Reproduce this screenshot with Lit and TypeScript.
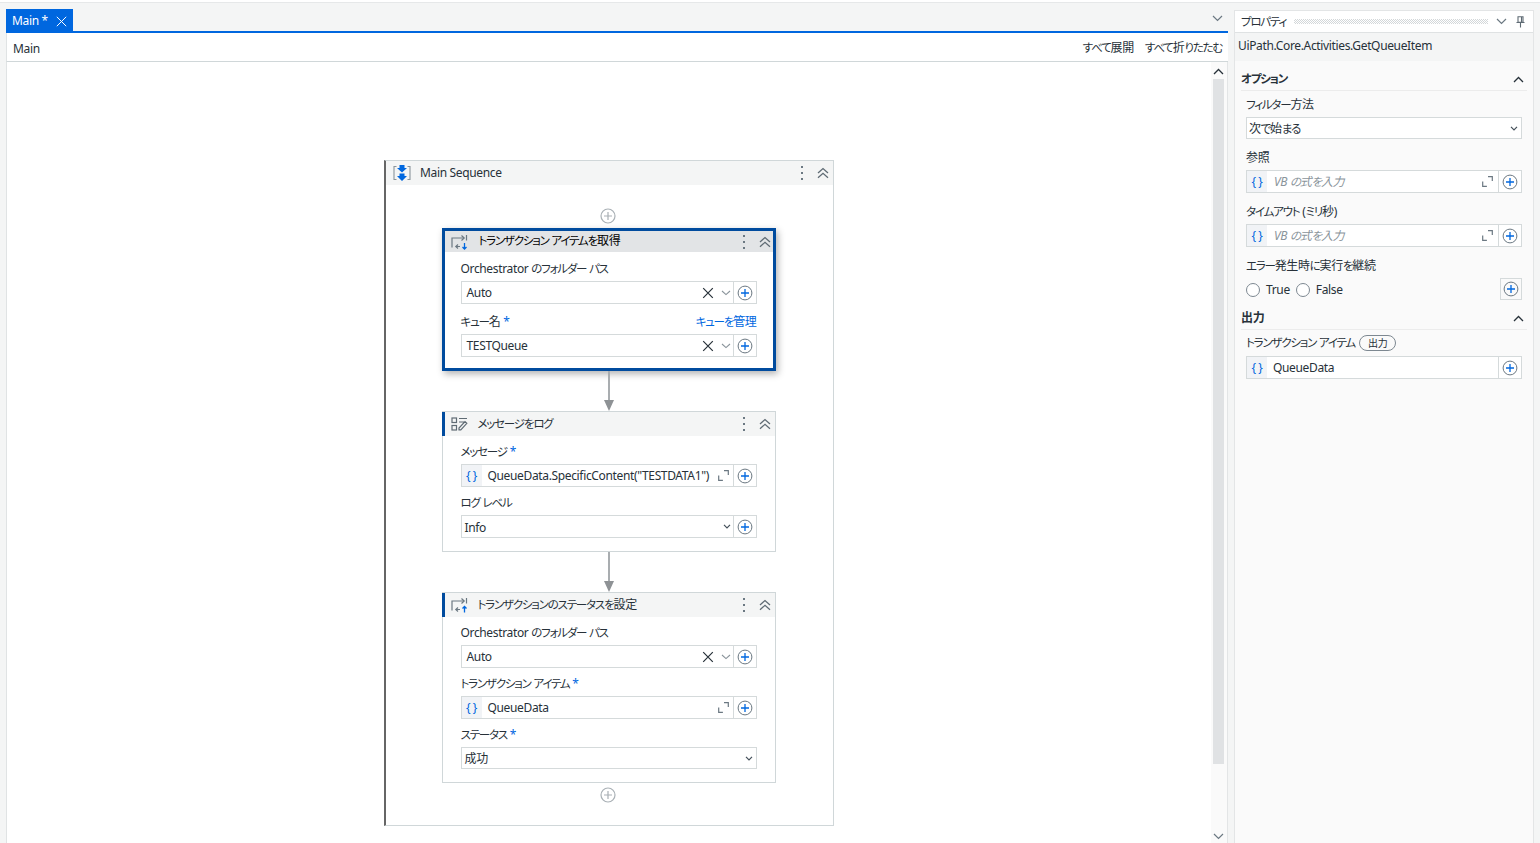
import { LitElement, css, html, svg } from 'lit'
import { customElement } from 'lit/decorators.js'

// kana is set tighter than the rest, the original UI font has narrow kana
const t = (text: string) =>
  text.split(/([\u3040-\u30FF]+)/).map((part, i) => (i % 2 ? html`<span class="kana">${part}</span>` : part))

const plusCircle = html`<svg class="plus" width="16" height="16" viewBox="0 0 16 16" fill="none">
  <circle cx="8" cy="8" r="6.9" stroke="#6b7882"/>
  <path d="M8 4v8M4 8h8" stroke="#0067df" stroke-width="1.3"/></svg>`

const addCircle = html`<svg class="add" width="16" height="16" viewBox="0 0 16 16" fill="none">
  <circle cx="8" cy="8" r="7" stroke="#a9b0b5" stroke-width="1.2"/>
  <path d="M8 4v8M4 8h8" stroke="#a9b0b5" stroke-width="1.2"/></svg>`

const clearX = html`<svg width="12" height="12" viewBox="0 0 12 12" fill="none">
  <path d="M1.2 1.2l9.6 9.6M10.8 1.2l-9.6 9.6" stroke="#273139" stroke-width="1.2"/></svg>`

const comboChevron = html`<svg width="10" height="6" viewBox="0 0 10 6" fill="none">
  <path d="M1 1l4 3.6L9 1" stroke="#8a949b" stroke-width="1.1"/></svg>`

const selectChevron = html`<svg width="8" height="5" viewBox="0 0 8 5" fill="none">
  <path d="M1 .8l3 3 3-3" stroke="#44505a" stroke-width="1.2"/></svg>`

const expandIcon = html`<svg width="11" height="11" viewBox="0 0 11 11" fill="none">
  <path d="M.7 5.5v4.8h4.2M6 .7h4.3V5" stroke="#6b7882" stroke-width="1.2"/></svg>`

const kebab = html`<svg width="4" height="14" viewBox="0 0 4 14">
  <g fill="#6b7882"><rect x="1" y="0" width="2" height="2"/><rect x="1" y="6" width="2" height="2"/><rect x="1" y="12" width="2" height="2"/></g></svg>`

const collapse = html`<svg width="12" height="12" viewBox="0 0 12 12" fill="none">
  <path d="M1 6l5-4.5L11 6M1 10.8l5-4.500 5 4.500" stroke="#5f6b74" stroke-width="1.3"/></svg>`

const chevronUp = html`<svg width="11" height="7" viewBox="0 0 11 7" fill="none">
  <path d="M1 6l4.5-4.5L10 6" stroke="#273139" stroke-width="1.3"/></svg>`

const chevronDown = html`<svg width="11" height="7" viewBox="0 0 11 7" fill="none">
  <path d="M1 1l4.5 4.5L10 1" stroke="#6b7882" stroke-width="1.2"/></svg>`

const sequenceIcon = html`<svg width="18" height="16" viewBox="0 0 18 16" fill="none">
  <path d="M3.500 1.500H1v13h2.500M14.500 1.500H17v13h-2.500" stroke="#8a949b" stroke-width="1.1"/>
  <path d="M6.500 0h5v3H14L9 7.500 4 3h2.500zM6.500 8.500h5V11H14l-5 5-5-5h2.500z" fill="#0067df"/></svg>`

const transactionIcon = (down: boolean) => html`<svg width="17" height="16" viewBox="0 0 17 16" fill="none">
  <path d="M1 13.500V4h12" stroke="#6b7882" stroke-width="1.2"/>
  <path d="M10.500 1.500L13.200 4l-2.700 2.500" stroke="#6b7882" stroke-width="1.2"/>
  <path d="M15.500 1v5.500" stroke="#6b7882" stroke-width="1.2"/>
  <path d="M5 12.500h4M7 10.500l-2.200 2 2.200 2" stroke="#6b7882" stroke-width="1.2"/>
  ${down
    ? svg`<path d="M13.500 9v6M11.500 13l2 2 2-2" stroke="#0067df" stroke-width="1.3"/>`
    : svg`<path d="M13.500 15.500v-6M11.500 11.500l2-2 2 2" stroke="#0067df" stroke-width="1.3"/>`}</svg>`

const logIcon = html`<svg width="17" height="16" viewBox="0 0 17 16" fill="none" stroke="#5f6b74" stroke-width="1.2">
  <rect x="1" y="2" width="4.500" height="4.500"/><rect x="1" y="9.500" width="4.500" height="4.500"/>
  <path d="M8 2.500h8M8 6h5M8 13.800h1.800l6-6.500-1.800-1.600-6 6.400z"/></svg>`

const pinIcon = html`<svg width="9" height="12" viewBox="0 0 9 12" fill="none">
  <path d="M2 .8h5v5.400H2zM.5 6.500h8M4.500 6.500V11.500M5.500 1v5" stroke="#5f6b74" stroke-width="1.1"/></svg>`

const connector = html`<svg class="connector" width="12" height="40" viewBox="0 0 12 40">
  <rect x="5" y="0" width="2" height="30" fill="#a9adb0"/>
  <path d="M1 29h10l-5 11z" fill="#8e9295"/></svg>`

@customElement('app-root')
export class AppRoot extends LitElement {
  static styles = css`
    :host {
      display: block;
      height: 843px;
      overflow: hidden;
      background: #f4f5f5;
      color: #273139;
      font: 12px/16px "Noto Sans", "Noto Sans CJK JP", sans-serif;
      font-feature-settings: "palt";
      letter-spacing: -0.35px;
    }
    svg { display: block; flex: none; }
    .kana { font-size: 11.5px; letter-spacing: -1.2px; }

    .shell {
      height: 843px;
      box-sizing: border-box;
      background: #f4f5f5;
      border-top: 2px solid #fff;
      display: flex;
      flex-direction: column;
    }
    .topline { height: 1px; background: #e6e8e9; flex: none; }
    .columns { flex: 1; min-height: 0; display: flex; padding-left: 6px; }

    /* designer */
    .designer { width: 1222px; display: flex; flex-direction: column; flex: none; }
    .tabs {
      height: 30px;
      box-sizing: border-box;
      padding-top: 6px;
      display: flex;
      justify-content: space-between;
      border-bottom: 2px solid #0067df;
      flex: none;
    }
    .tab {
      width: 67px;
      height: 22px;
      box-sizing: border-box;
      background: #0067df;
      color: #fff;
      padding: 2px 6px 0;
      display: flex;
      align-items: center;
      justify-content: space-between;
    }
    .tabs-menu { margin: 6px 5px 0 0; }
    .breadcrumb {
      height: 29px;
      box-sizing: border-box;
      background: #fff;
      border-left: 1px solid #e0e3e4;
      border-bottom: 1px solid #d0d7d9;
      padding: 4px 6px 0 6px;
      display: flex;
      align-items: center;
      justify-content: space-between;
      flex: none;
    }
    .breadcrumb-actions { display: flex; gap: 11px; margin-top: -2px; }
    .work { flex: 1; min-height: 0; display: flex; }
    .canvas {
      width: 1205px;
      box-sizing: border-box;
      background: #fff;
      border-left: 1px solid #e0e3e4;
      padding: 98px 0 0 377px;
      flex: none;
    }
    .scroll {
      flex: 1;
      background: #fafafa;
      border-right: 1px solid #e3e5e6;
      display: flex;
      flex-direction: column;
      align-items: center;
      padding: 6px 2px 3px 0;
    }
    .thumb { width: 11px; flex: 1; background: #e0e2e4; margin: 4px 0 69px; }

    /* sequence */
    .sequence {
      width: 450px;
      height: 666px;
      box-sizing: border-box;
      background: #fff;
      border: 1px solid #d0d7d9;
      border-left: 2px solid #666;
    }
    .head {
      height: 24px;
      box-sizing: border-box;
      background: #f4f5f5;
      display: flex;
      align-items: center;
      padding: 0 4px 0 7px;
    }
    .head .title { margin-left: 9px; flex: 1; white-space: nowrap; }
    .head .more { margin-right: 13px; }
    .flow { display: flex; flex-direction: column; align-items: center; padding: 23px 2px 0 0; }
    .flow .add { margin: 0 1px 4px 0; }
    .flow .card + .add { margin: 4px 1px 0 0; }

    /* activity card */
    .card {
      width: 334px;
      box-sizing: border-box;
      background: #fff;
      border: 1px solid #d0d7d9;
    }
    .card .head { margin-left: -1px; border-left: 3px solid #004b9e; padding-left: 6px; }
    .card .head .title { margin-left: 10px; }
    .card .body { padding: 7px 18px 13px; display: flex; flex-direction: column; gap: 7px; }
    .card .label { line-height: 18px; }
    .card.selected {
      border: 3px solid #004b9e;
      box-shadow: 2px 3px 7px rgba(0, 0, 0, 0.3);
    }
    .card.selected .head {
      height: 21px;
      margin-left: 0;
      border-left: 0;
      background: #e2e4e6;
      padding-right: 2px;
      color: #000;
    }
    .card.selected .head .title { margin-left: 11px; padding-bottom: 2px; }
    .card.selected .body { padding: 8px 16px 11px; gap: 9px; }
    .field { display: flex; flex-direction: column; gap: 5px; }
    .label { height: 16px; display: flex; justify-content: space-between; white-space: nowrap; }
    .star { color: #0067df; }
    .link { color: #0067df; }

    /* inputs */
    .input {
      height: 23px;
      box-sizing: border-box;
      border: 1px solid #d5dadb;
      background: #fff;
      display: flex;
      align-items: center;
    }
    .input .value { flex: 1; min-width: 0; overflow: hidden; white-space: nowrap; padding-left: 5px; }
    .input .clear { margin-right: 7px; }
    .input .combo { margin-right: 2px; }
    .input .sel { margin-right: 3px; }
    .input .plus-box {
      width: 22px;
      height: 21px;
      border-left: 1px solid #d5dadb;
      display: flex;
      align-items: center;
      justify-content: center;
      flex: none;
    }
    .input .braces {
      width: 20px;
      height: 21px;
      background: #f1f3f6;
      color: #0067df;
      display: flex;
      align-items: center;
      justify-content: center;
      flex: none;
    }
    .input .braces + .value { padding-left: 6px; }
    .input .expand { margin: 0 5px 0 6px; }
    .card .input .expand { margin-right: 4px; }
    .input .braces + .placeholder { padding-left: 7px; color: #8a949b; font-style: italic; }
    .plain .value { padding: 2px 0 0 2px; }
    .card .plain .value { padding-left: 3px; }
    .plain.short { height: 22px; }
    .plain.has-plus .sel { margin-right: 2px; }

    /* properties */
    .props {
      margin: 7px 0 0 6px;
      width: 300px;
      box-sizing: border-box;
      background: #fafafa;
      border: 1px solid #e3e5e6;
      border-bottom: 0;
      flex: none;
    }
    .props-head {
      height: 22px;
      box-sizing: border-box;
      background: #fff;
      border-bottom: 1px solid #dfe2e3;
      display: flex;
      align-items: center;
      padding: 0 8px 0 6px;
    }
    .grip {
      flex: 1;
      height: 5px;
      margin: 0 8px;
      background: conic-gradient(#d3d7d9 25%, transparent 0 50%, #d3d7d9 0 75%, transparent 0) 0 0 / 2px 2px;
    }
    .props-head svg:last-child { margin-left: 9px; }
    .props-type {
      height: 28px;
      box-sizing: border-box;
      background: #f4f5f5;
      padding: 0 0 2px 3px;
      display: flex;
      align-items: center;
    }
    .section {
      margin: 0 6px;
      padding: 0 3px 0 0;
      box-sizing: border-box;
      border-bottom: 1px solid #ececec;
      display: flex;
      align-items: center;
      justify-content: space-between;
      font-weight: 600;
    }
    .section.first { height: 30px; padding-top: 7px; }
    .section.second { height: 25px; margin-top: 5px; padding-top: 2px; }
    .rows { display: flex; flex-direction: column; gap: 10px; padding: 5px 11px 0; }
    .rows .label { line-height: 18px; }
    .radio-line { display: flex; align-items: center; height: 22px; }
    .radio {
      width: 14px;
      height: 14px;
      box-sizing: border-box;
      border: 1px solid #7d8891;
      border-radius: 50%;
      background: #fff;
      margin: 2px 6px 0 0;
      flex: none;
    }
    .radio-line .opt { margin: 2px 6px 0 0; }
    .radio-line .plus-only {
      margin-left: auto;
      width: 22px;
      height: 22px;
      box-sizing: border-box;
      border: 1px solid #d5dadb;
      display: flex;
      align-items: center;
      justify-content: center;
    }
    .pill {
      border: 1px solid #7d8891;
      border-radius: 9px;
      height: 16px;
      line-height: 14px;
      box-sizing: border-box;
      padding: 0 8px;
      font-size: 10px;
      margin-left: 4px;
    }
    .label.left { justify-content: flex-start; align-items: center; }
  `

  private combo(value: string) {
    return html`<div class="input">
      <span class="value">${value}</span>
      <span class="clear">${clearX}</span>
      <span class="combo">${comboChevron}</span>
      <span class="plus-box">${plusCircle}</span>
    </div>`
  }

  private expr(value: string, placeholder = false, expand = true) {
    return html`<div class="input">
      <span class="braces">{ }</span>
      <span class="value ${placeholder ? 'placeholder' : ''}">${t(value)}</span>
      ${expand ? html`<span class="expand">${expandIcon}</span>` : ''}
      <span class="plus-box">${plusCircle}</span>
    </div>`
  }

  private select(value: string, plus = false) {
    return html`<div class="input plain ${plus ? 'has-plus' : 'short'}">
      <span class="value">${t(value)}</span>
      <span class="sel">${selectChevron}</span>
      ${plus ? html`<span class="plus-box">${plusCircle}</span>` : ''}
    </div>`
  }

  private field(label: string, control: unknown, required = false, link = '') {
    return html`<div class="field">
      <div class="label">
        <span>${t(label)}${required ? html`<span class="star">*</span>` : ''}</span>
        ${link ? html`<span class="link">${t(link)}</span>` : ''}
      </div>
      ${control}
    </div>`
  }

  private card(icon: unknown, title: string, fields: unknown, selected = false) {
    return html`<div class="card ${selected ? 'selected' : ''}">
      <div class="head">
        ${icon}
        <span class="title">${t(title)}</span>
        <span class="more">${kebab}</span>
        ${collapse}
      </div>
      <div class="body">${fields}</div>
    </div>`
  }

  private renderDesigner() {
    return html`<div class="designer">
      <div class="tabs">
        <div class="tab">
          <span>Main *</span>
          <svg width="11" height="11" viewBox="0 0 11 11" fill="none"><path d="M.8.8l9.400 9.400M10.200.8L.8 10.200" stroke="#fff" stroke-width="1"/></svg>
        </div>
        <span class="tabs-menu">${chevronDown}</span>
      </div>
      <div class="breadcrumb">
        <span>Main</span>
        <div class="breadcrumb-actions"><span>${t('すべて展開')}</span><span>${t('すべて折りたたむ')}</span></div>
      </div>
      <div class="work">
        <div class="canvas">
          <div class="sequence">
            <div class="head">
              ${sequenceIcon}
              <span class="title">Main Sequence</span>
              <span class="more">${kebab}</span>
              ${collapse}
            </div>
            <div class="flow">
              ${addCircle}
              ${this.card(transactionIcon(true), 'トランザクション アイテムを取得', html`
                ${this.field('Orchestrator のフォルダー パス', this.combo('Auto'))}
                ${this.field('キュー名 ', this.combo('TESTQueue'), true, 'キューを管理')}
              `, true)}
              ${connector}
              ${this.card(logIcon, 'メッセージをログ', html`
                ${this.field('メッセージ ', this.expr('QueueData.SpecificContent("TESTDATA1")'), true)}
                ${this.field('ログ レベル', this.select('Info', true))}
              `)}
              ${connector}
              ${this.card(transactionIcon(false), 'トランザクションのステータスを設定', html`
                ${this.field('Orchestrator のフォルダー パス', this.combo('Auto'))}
                ${this.field('トランザクション アイテム ', this.expr('QueueData'), true)}
                ${this.field('ステータス ', this.select('成功'), true)}
              `)}
              ${addCircle}
            </div>
          </div>
        </div>
        <div class="scroll">
          ${chevronUp}
          <div class="thumb"></div>
          ${chevronDown}
        </div>
      </div>
    </div>`
  }

  private renderProps() {
    return html`<div class="props">
      <div class="props-head">
        <span>${t('プロパティ')}</span>
        <span class="grip"></span>
        ${chevronDown}
        ${pinIcon}
      </div>
      <div class="props-type">UiPath.Core.Activities.GetQueueItem</div>
      <div class="section first"><span>${t('オプション')}</span>${chevronUp}</div>
      <div class="rows">
        ${this.field('フィルター方法', this.select('次で始まる'))}
        ${this.field('参照', this.expr('VB の式を入力', true))}
        ${this.field('タイムアウト (ミリ秒)', this.expr('VB の式を入力', true))}
        ${this.field('エラー発生時に実行を継続', html`<div class="radio-line">
          <span class="radio"></span><span class="opt">True</span>
          <span class="radio"></span><span class="opt">False</span>
          <span class="plus-only">${plusCircle}</span>
        </div>`)}
      </div>
      <div class="section second"><span>出力</span>${chevronUp}</div>
      <div class="rows">
        <div class="field">
          <div class="label left"><span>${t('トランザクション アイテム')}</span><span class="pill">出力</span></div>
          ${this.expr('QueueData', false, false)}
        </div>
      </div>
    </div>`
  }

  render() {
    return html`<div class="shell">
      <div class="topline"></div>
      <div class="columns">
        ${this.renderDesigner()}
        ${this.renderProps()}
      </div>
    </div>`
  }
}
